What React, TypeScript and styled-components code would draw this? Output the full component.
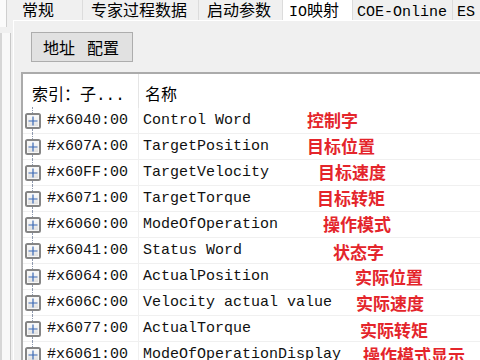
import styled, { createGlobalStyle } from 'styled-components';

const GlobalStyle = createGlobalStyle`
  html, body { margin: 0; padding: 0; }
  body {
    background: #f0f0f0;
    font-family: "Noto Sans CJK SC", sans-serif;
  }
  #root { width: 480px; height: 360px; overflow: hidden; }
`;

const Screen = styled.div`
  display: flex;
  width: 480px;
  height: 360px;
  overflow: hidden;
  background: #f0f0f0;
`;

// left neighbour pane, mostly cut off
const LeftStrip = styled.div`
  width: 13px;
  flex: none;
  display: flex;
  flex-direction: column;
`;

const StripTop = styled.div`
  height: 27px;
  width: 6px;
  background: #fbfbfb;
  border-right: 1px solid #cfcfcf;
`;

const StripBottom = styled.div`
  margin-top: 6px;
  flex: 1;
  width: 8px;
  background: #f8f8f8;
  border-left: 2px solid #d6d6d6;
  border-right: 1px solid #c8c8c8;
`;

const Main = styled.div`
  flex: 1;
  min-width: 0;
  display: flex;
  flex-direction: column;
`;

const TabBar = styled.div`
  display: flex;
  height: 20px;
  flex: none;
  overflow: hidden;
`;

const Tab = styled.div<{ $w: number; $pad: number; $active?: boolean }>`
  flex: none;
  box-sizing: border-box;
  width: ${(p) => p.$w}px;
  padding: 1px 0 0 ${(p) => p.$pad}px;
  background: ${(p) => (p.$active ? '#ffffff' : '#f0f0f0')};
  border-right: 1px solid #dcdcdc;
  font-size: 16px;
  line-height: 17px;
  color: #000;
  white-space: nowrap;
`;

const Mono = styled.span<{ $size?: number }>`
  font-family: "Liberation Mono", "Noto Sans CJK SC", monospace;
  font-size: ${(p) => p.$size ?? 15}px;
`;

const Panel = styled.div`
  flex: 1;
  display: flex;
  flex-direction: column;
  border-top: 1px solid #ffffff;
  border-left: 1px solid #ffffff;
  min-height: 0;
`;

const ConfigButton = styled.button`
  align-self: flex-start;
  margin: 11px 0 0 17px;
  width: 102px;
  height: 30px;
  box-sizing: border-box;
  padding: 0 0 0 11px;
  border: 1px solid #adadad;
  background: #e1e1e1;
  display: flex;
  align-items: center;
  gap: 12px;
  font-family: "Noto Sans CJK SC", sans-serif;
  font-size: 16px;
  color: #000;
`;

const List = styled.div`
  flex: 1;
  margin: 10px 0 0 7px;
  background: #ffffff;
  border-top: 2px solid #ababab;
  border-left: 2px solid #ababab;
  display: flex;
  flex-direction: column;
  overflow: hidden;
`;

const HeaderRow = styled.div`
  display: grid;
  grid-template-columns: 116px 1fr;
  height: 34px;
  flex: none;
`;

const HeadCell = styled.div<{ $pad: number; $sep?: boolean }>`
  display: flex;
  align-items: center;
  padding: 3px 0 0 ${(p) => p.$pad}px;
  border-right: ${(p) => (p.$sep ? '1px solid #e5e5e5' : 'none')};
  font-size: 16px;
  color: #000;
  white-space: nowrap;
`;

const Row = styled.div`
  position: relative;
  display: grid;
  grid-template-columns: 116px 1fr;
  height: 26px;
  flex: none;
  box-sizing: border-box;
  border-bottom: 1px solid #f0f0f0;
`;

const IndexCell = styled.div`
  display: flex;
  align-items: center;
  padding-left: 2px;
  border-right: 1px solid #f0f0f0;
  font-family: "Liberation Mono", monospace;
  font-size: 15px;
  color: #111;
  white-space: nowrap;
`;

const Expander = styled.span`
  position: relative;
  flex: none;
  width: 16px;
  height: 16px;
  margin-right: 6px;

  &::before,
  &::after {
    content: '';
    position: absolute;
    left: 7px;
    height: 6px;
    border-left: 1px dotted #8f9ab0;
  }
  &::before { bottom: 100%; }
  &::after { top: 100%; }

  svg { display: block; }
`;

const NameCell = styled.div`
  display: flex;
  align-items: center;
  padding-left: 4px;
  font-family: "Liberation Mono", monospace;
  font-size: 15px;
  color: #111;
  white-space: nowrap;
  overflow: hidden;
`;

// red hand-written annotations laid over the list
const Note = styled.span<{ $x: number; $dy: number }>`
  position: absolute;
  left: ${(p) => p.$x}px;
  top: calc(50% + ${(p) => p.$dy}px);
  transform: translateY(-50%);
  font-family: "Noto Sans CJK SC", sans-serif;
  font-weight: 700;
  font-size: 17px;
  line-height: 20px;
  color: #e4252b;
  white-space: nowrap;
`;

const tabs = [
  { label: <>常规</>, w: 70, pad: 9 },
  { label: <>专家过程数据</>, w: 116, pad: 8 },
  { label: <>启动参数</>, w: 84, pad: 8 },
  { label: <><Mono>IO</Mono>映射</>, w: 70, pad: 6, active: true },
  { label: <Mono>COE-Online</Mono>, w: 100, pad: 4 },
  { label: <Mono>ES</Mono>, w: 40, pad: 4 },
];

const rows = [
  { idx: '#x6040:00', name: 'Control Word', note: '控制字', x: 307, dy: 0 },
  { idx: '#x607A:00', name: 'TargetPosition', note: '目标位置', x: 307, dy: 0 },
  { idx: '#x60FF:00', name: 'TargetVelocity', note: '目标速度', x: 318, dy: 0 },
  { idx: '#x6071:00', name: 'TargetTorque', note: '目标转矩', x: 317, dy: 0 },
  { idx: '#x6060:00', name: 'ModeOfOperation', note: '操作模式', x: 323, dy: 0 },
  { idx: '#x6041:00', name: 'Status Word', note: '状态字', x: 333, dy: 2 },
  { idx: '#x6064:00', name: 'ActualPosition', note: '实际位置', x: 355, dy: 1 },
  { idx: '#x606C:00', name: 'Velocity actual value', note: '实际速度', x: 356, dy: 1 },
  { idx: '#x6077:00', name: 'ActualTorque', note: '实际转矩', x: 360, dy: 2 },
  { idx: '#x6061:00', name: 'ModeOfOperationDisplay', note: '操作模式显示', x: 363, dy: 1 },
];

const PlusBox = () => (
  <svg width="16" height="16" viewBox="0 0 16 16">
    <defs>
      <linearGradient id="pb" x1="0" y1="0" x2="0" y2="1">
        <stop offset="0" stopColor="#ffffff" />
        <stop offset="1" stopColor="#dcdcdc" />
      </linearGradient>
    </defs>
    <rect x="1" y="1" width="14" height="14" rx="1.5" fill="url(#pb)" stroke="#858585" strokeWidth="2" />
    <rect x="2.5" y="2.5" width="11" height="11" fill="none" stroke="#f6f6f6" strokeWidth="1" />
    <path d="M3.5 8H12.5M8 3.5V12.5" stroke="#3b69b5" strokeWidth="1.2" />
  </svg>
);

export default function App() {
  return (
    <>
      <GlobalStyle />
      <Screen>
        <LeftStrip>
          <StripTop />
          <StripBottom />
        </LeftStrip>
        <Main>
          <TabBar>
            {tabs.map((t, i) => (
              <Tab key={i} $w={t.w} $pad={t.pad} $active={t.active}>
                {t.label}
              </Tab>
            ))}
          </TabBar>
          <Panel>
            <ConfigButton>
              <span>地址</span>
              <span>配置</span>
            </ConfigButton>
            <List>
              <HeaderRow>
                <HeadCell $pad={9} $sep>
                  <span>
                    索引：子<Mono $size={16}>...</Mono>
                  </span>
                </HeadCell>
                <HeadCell $pad={6}>名称</HeadCell>
              </HeaderRow>
              {rows.map((r) => (
                <Row key={r.idx}>
                  <IndexCell>
                    <Expander>
                      <PlusBox />
                    </Expander>
                    {r.idx}
                  </IndexCell>
                  <NameCell>{r.name}</NameCell>
                  <Note $x={r.x - 23} $dy={r.dy - 1}>{r.note}</Note>
                </Row>
              ))}
            </List>
          </Panel>
        </Main>
      </Screen>
    </>
  );
}
